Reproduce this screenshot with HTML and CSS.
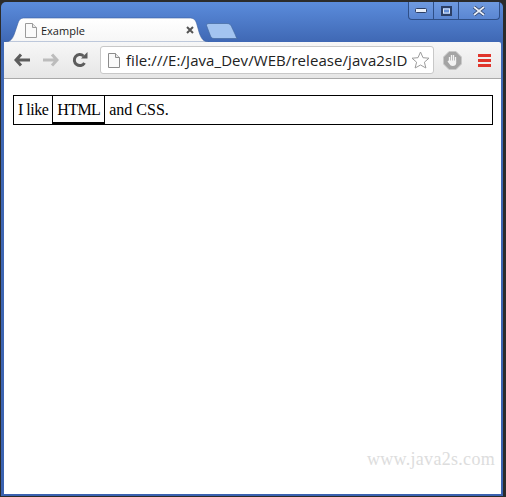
FILE: index.html
```html
<!DOCTYPE html>
<html lang="en">

<head>
    <meta charset="UTF-8">
    <title>Example</title>
    <link rel="stylesheet" href="styles.css">
</head>

<body>
    <div class="window">
        <div class="titlebar">
            <div class="tab">
                <svg class="tab-shape" width="204" height="25" viewBox="0 0 204 25">
                    <path d="M0 25 C6 25 8 21 10 15 L13 6 C14.500 2 16 1 20 1 L184 1 C188 1 190 2 191.500 6 L194 15 C196 21 198 25 204 25 Z" fill="url(#tabFill)" stroke="#3a5f9f" stroke-width="0.600"/>
                    <defs>
                        <linearGradient id="tabFill" x1="0" y1="0" x2="0" y2="1">
                            <stop offset="0" stop-color="#ffffff"/>
                            <stop offset="1" stop-color="#f6f6f6"/>
                        </linearGradient>
                    </defs>
                </svg>
                <svg class="doc-icon" width="12" height="15" viewBox="0 0 12 15">
                    <path d="M0.500 0.500 H7.500 L11.500 4.500 V14.500 H0.500 Z" fill="#fafafa" stroke="#9a9a9a"/>
                    <path d="M7.500 0.500 V4.500 H11.500" fill="#e8e8e8" stroke="#9a9a9a"/>
                </svg>
                <span class="tab-title">Example</span>
                <svg class="tab-close" width="8" height="8" viewBox="0 0 8 8">
                    <path d="M1 1 L7 7 M7 1 L1 7" stroke="#555" stroke-width="2"/>
                </svg>
            </div>
            <svg class="new-tab" width="32" height="16" viewBox="0 0 32 16">
                <path d="M0.500 2.500 C0.500 1 1.500 0.500 3 0.500 H21 C23.500 0.500 24.500 1.500 25.500 3.500 L29 11 C29.800 13 30.500 15.500 31.500 15.500 H8 C6 15.500 5.200 14.500 4.500 13 Z" fill="#a3c4f0" stroke="#44689f" stroke-width="0.700"/>
            </svg>
            <div class="window-controls">
                <div class="control control-min">
                    <svg width="12" height="6" viewBox="0 0 12 6"><rect x="0.500" y="0.500" width="11" height="4" rx="1" fill="#e8eef8" stroke="#2c3f66"/></svg>
                </div>
                <div class="control control-max">
                    <svg width="11" height="10" viewBox="0 0 11 10"><rect x="1" y="1" width="9" height="8" fill="none" stroke="#2c3f66" stroke-width="2"/><rect x="2.500" y="3" width="6" height="4" fill="none" stroke="#dfe8f6"/></svg>
                </div>
                <div class="control control-close">
                    <svg width="14" height="10" viewBox="0 0 14 10"><path d="M2 1 L12 9 M12 1 L2 9" stroke="#2c3f66" stroke-width="3.400"/><path d="M2 1 L12 9 M12 1 L2 9" stroke="#e8eef8" stroke-width="1.800"/></svg>
                </div>
            </div>
        </div>

        <div class="toolbar">
            <svg class="nav-icon" width="16" height="14" viewBox="0 0 16 14">
                <path d="M7 1.500 L2 7 L7 12.500 M2.500 7 H16" fill="none" stroke="#5c5c5c" stroke-width="3"/>
            </svg>
            <svg class="nav-icon" width="16" height="14" viewBox="0 0 16 14">
                <path d="M9 1.500 L14 7 L9 12.500 M13.500 7 H0" fill="none" stroke="#bcbcbc" stroke-width="3"/>
            </svg>
            <svg class="nav-icon" width="16" height="16" viewBox="0 0 16 16">
                <path d="M12.500 11 A5.500 5.500 0 1 1 11.500 4" fill="none" stroke="#5c5c5c" stroke-width="3"/>
                <path d="M9 6.500 L15.500 6.500 L15.500 0 Z" fill="#5c5c5c"/>
            </svg>
            <div class="omnibox">
                <svg class="doc-icon-url" width="12" height="15" viewBox="0 0 12 15">
                    <path d="M0.500 0.500 H7.500 L11.500 4.500 V14.500 H0.500 Z" fill="#fafafa" stroke="#8c8c8c"/>
                    <path d="M7.500 0.500 V4.500 H11.500" fill="#e8e8e8" stroke="#8c8c8c"/>
                </svg>
                <span class="url">file:///E:/Java_Dev/WEB/release/java2sID</span>
                <svg class="star" width="19" height="18" viewBox="0 0 19 18">
                    <path d="M9.500 1 L12 6.700 L18 7.200 L13.400 11.200 L14.900 17 L9.500 14 L4.100 17 L5.600 11.200 L1 7.200 L7 6.700 Z" fill="#fff" stroke="#9c9c9c"/>
                </svg>
            </div>
            <svg class="stop" width="19" height="19" viewBox="0 0 19 19">
                <path d="M6 0.500 H13 L18.500 6 V13 L13 18.500 H6 L0.500 13 V6 Z" fill="#a4a4a4" stroke="#c8c8c8"/>
                <path d="M6.500 10 V6 M8.500 10 V4 M10.500 10 V4 M12.500 10 V6" fill="none" stroke="#f2f2f2" stroke-width="1.300"/>
                <path d="M5.800 9.500 H13.200 V12 C13.200 14 11.800 15 9.800 15 C8 15 7.200 14 6.500 13 L4.500 10.500 L5.300 9.800 Z" fill="#f2f2f2"/>
            </svg>
            <div class="menu-icon">
                <span></span>
                <span></span>
                <span></span>
            </div>
        </div>

        <div class="page">
            <div class="like-table">
                <span class="cell cell-first">I like</span>
                <span class="cell cell-boxed">HTML</span>
                <span class="cell">and CSS.</span>
            </div>
            <div class="watermark">www.java2s.com</div>
        </div>
    </div>
</body>

</html>
```

FILE: styles.css
```css
* {
    margin: 0;
    padding: 0;
    box-sizing: border-box;
}

body {
    width: 506px;
    height: 497px;
    padding: 2px 3px 1px 1px;
    background-color: #2b2b2b;
    overflow: hidden;
}

.window {
    height: 494px;
    display: flex;
    flex-direction: column;
    padding: 0 2px 2px 3px;
    background: linear-gradient(to bottom, #5b8cdc 0, #3f68b4 40px, #3a62b0 100%);
    border-radius: 5px 5px 0 0;
}

/* title bar and tabs */
.titlebar {
    height: 40px;
    flex: none;
    display: flex;
    align-items: flex-end;
}

.tab {
    position: relative;
    width: 204px;
    height: 25px;
    margin-left: 1px;
    display: flex;
    align-items: center;
    padding: 1px 0 0 20px;
    flex: none;
}

.tab-shape {
    position: absolute;
    left: 0;
    top: 0;
}

.doc-icon,
.tab-title,
.tab-close {
    position: relative;
}

.tab-title {
    margin-left: 4px;
    font-family: "Open Sans", sans-serif;
    font-size: 11px;
    color: #222;
}

.tab-close {
    margin-left: auto;
    margin-right: 15px;
}

.new-tab {
    margin: 0 0 3px -3px;
    flex: none;
}

.window-controls {
    margin-left: auto;
    margin-right: 1px;
    align-self: flex-start;
    width: 92px;
    height: 18px;
    display: flex;
    border: 1px solid #2f4f87;
    border-top: none;
    border-radius: 0 0 4px 4px;
    background: linear-gradient(to bottom, #6f9ae0, #5a86d2);
}

.control {
    display: flex;
    align-items: center;
    justify-content: center;
}

.control-min {
    width: 25px;
    border-right: 1px solid #2f4f87;
}

.control-max {
    width: 25px;
    border-right: 1px solid #2f4f87;
}

.control-close {
    flex: 1;
}

/* toolbar */
.toolbar {
    height: 37px;
    flex: none;
    display: flex;
    align-items: center;
    padding: 0 10px 0 10px;
    background: linear-gradient(to bottom, #f7f7f7, #e6e6e6);
    border-bottom: 1px solid #a9a9a9;
    border-radius: 0 2px 0 0;
}

.nav-icon {
    margin-right: 13px;
    flex: none;
}

.omnibox {
    width: 334px;
    height: 28px;
    margin-left: -1px;
    display: flex;
    align-items: center;
    padding: 0 3px 0 7px;
    background-color: #fff;
    border: 1px solid #c8c8c8;
    border-radius: 3px;
    flex: none;
}

.url {
    margin-left: 6px;
    font-family: "Open Sans", sans-serif;
    font-size: 15px;
    letter-spacing: 0.07px;
    color: #222;
    white-space: nowrap;
}

.star {
    margin-left: auto;
}

.stop {
    margin-left: 9px;
    flex: none;
}

.menu-icon {
    width: 13px;
    margin-left: 16px;
    display: flex;
    flex-direction: column;
    gap: 2px;
}

.menu-icon span {
    height: 3px;
    background-color: #e0352b;
}

/* page content */
.page {
    flex: 1;
    display: flex;
    flex-direction: column;
    padding: 16px 8px 24px 9px;
    background-color: #fff;
    font-family: "Liberation Serif", serif;
    font-size: 16px;
    color: #000;
}

.like-table {
    height: 30px;
    display: flex;
    border: 1px solid #000;
}

.cell {
    padding: 0 4px;
    line-height: 27px;
}

.cell-first {
    letter-spacing: -0.5px;
}

.cell-boxed {
    border: 1px solid #000;
    border-top: none;
    border-bottom-width: 2px;
    letter-spacing: -0.6px;
}

.watermark {
    margin-top: auto;
    margin-right: -2px;
    align-self: flex-end;
    font-size: 18px;
    letter-spacing: 0.3px;
    color: #dddddd;
}
```
